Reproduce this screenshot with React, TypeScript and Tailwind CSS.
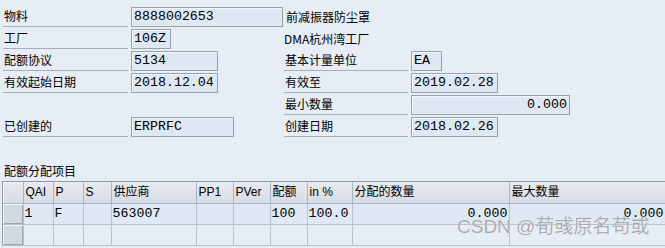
import React from 'react';

const cjk = { fontFamily: '"Noto Sans CJK SC", "Liberation Sans", sans-serif' };
const mono = { fontFamily: '"Liberation Mono", "Noto Sans CJK SC", monospace' };

const Label = ({ text, w = 'w-[125px]' }: { text: string; w?: string }) => (
  <div className={`${w} h-[21px] border-b border-[#a7b0ba] text-[12px] leading-[20px] pl-[1px] text-black`} style={cjk}>
    {text}
  </div>
);

const Box = ({ value, w, right }: { value: string; w: string; right?: boolean }) => (
  <div
    className={`${w} h-[20px] border border-[#97a2ae] bg-[#dde8f2] shadow-[inset_1px_1px_0_#f4f8fb] px-[2px] text-[13.3px] leading-[18px] text-black ${right ? 'text-right' : ''}`}
    style={mono}
  >
    {value}
  </div>
);

const cols = [20, 30, 30, 28, 85, 37, 37, 37, 45, 157, 156];
const heads = ['', 'QAI', 'P', 'S', '供应商', 'PP1', 'PVer', '配额', 'in %', '分配的数量', '最大数量'];
const row1 = ['', '1', 'F', '', '563007', '', '', '100', '100.0', '0.000', '0.000'];

export default function App() {
  return (
    <div className="relative w-[665px] h-[248px] overflow-hidden bg-[#e6edf4]">
      {/* header form */}
      <div className="flex flex-col pt-[6px] pl-[3px]">
        <div className="flex h-[22px] items-start">
          <Label text="物料" />
          <div className="w-[3px]" />
          <div className="mt-[1px]"><Box value="8888002653" w="w-[152px]" /></div>
          <div className="pl-[3px] text-[12px] leading-[20px] pt-[1px]" style={cjk}>前减振器防尘罩</div>
        </div>
        <div className="flex h-[22px] items-start">
          <Label text="工厂" />
          <div className="w-[3px]" />
          <div className="mt-[1px]"><Box value="106Z" w="w-[40px]" /></div>
          <div className="w-[113px]" />
          <div className="text-[12px] leading-[20px] pt-[1px]" style={cjk}>DMA杭州湾工厂</div>
        </div>
        <div className="flex h-[22px] items-start">
          <Label text="配额协议" />
          <div className="w-[3px]" />
          <div className="mt-[1px]"><Box value="5134" w="w-[87px]" /></div>
          <div className="w-[66px]" />
          <Label text="基本计量单位" w="w-[124px]" />
          <div className="w-[3px]" />
          <div className="mt-[1px]"><Box value="EA" w="w-[31px]" /></div>
        </div>
        <div className="flex h-[22px] items-start">
          <Label text="有效起始日期" />
          <div className="w-[3px]" />
          <div className="mt-[1px]"><Box value="2018.12.04" w="w-[87px]" /></div>
          <div className="w-[66px]" />
          <Label text="有效至" w="w-[124px]" />
          <div className="w-[3px]" />
          <div className="mt-[1px]"><Box value="2019.02.28" w="w-[87px]" /></div>
        </div>
        <div className="flex h-[22px] items-start">
          <div className="w-[281px]" />
          <Label text="最小数量" w="w-[124px]" />
          <div className="w-[3px]" />
          <div className="mt-[1px]"><Box value="0.000" w="w-[159px]" right /></div>
        </div>
        <div className="flex h-[22px] items-start">
          <Label text="已创建的" />
          <div className="w-[3px]" />
          <div className="mt-[1px]"><Box value="ERPRFC" w="w-[103px]" /></div>
          <div className="w-[50px]" />
          <Label text="创建日期" w="w-[124px]" />
          <div className="w-[3px]" />
          <div className="mt-[1px]"><Box value="2018.02.26" w="w-[87px]" /></div>
        </div>
      </div>

      {/* items table */}
      <div className="mt-[25px] pl-[4px] text-[12px] leading-[16px] text-black" style={cjk}>配额分配项目</div>
      <div className="mt-[2px] ml-[2px] border-t border-l border-[#8d9aa8]">
        <table className="border-collapse table-fixed" style={{ width: cols.reduce((a, b) => a + b, 0) }}>
          <colgroup>
            {cols.map((w, i) => (
              <col key={i} style={{ width: w }} />
            ))}
          </colgroup>
          <tbody>
            <tr className="h-[21px]">
              {heads.map((h, i) => (
                <td
                  key={i}
                  className={`border-r border-b border-[#aab6c3] bg-gradient-to-b from-[#e8ebef] to-[#d6dce3] px-[2px] text-[12px] leading-[20px] whitespace-nowrap align-middle ${i === 0 ? 'shadow-[inset_1px_1px_0_#f5f7f9]' : ''}`}
                  style={{ fontFamily: '"Liberation Sans", "Noto Sans CJK SC", sans-serif' }}
                >
                  {h}
                </td>
              ))}
            </tr>
            <tr className="h-[21px]">
              {row1.map((v, i) => (
                <td
                  key={i}
                  className={`border-r border-b border-[#b6c2ce] px-[1px] text-[13.3px] leading-[20px] whitespace-nowrap ${
                    i === 0 ? 'bg-[#d3d8de] shadow-[inset_1px_1px_0_#f2f4f6,inset_-1px_-1px_0_#9aa3ad]' : 'bg-[#dfe9f3]'
                  } ${i >= 9 ? 'text-right' : ''}`}
                  style={mono}
                >
                  {v}
                </td>
              ))}
            </tr>
            <tr className="h-[21px]">
              {cols.map((_, i) => (
                <td
                  key={i}
                  className={`border-r border-b border-[#b6c2ce] ${
                    i === 0 ? 'bg-[#d3d8de] shadow-[inset_1px_1px_0_#f2f4f6,inset_-1px_-1px_0_#9aa3ad]' : 'bg-[#e6edf4]'
                  }`}
                />
              ))}
            </tr>
          </tbody>
        </table>
      </div>

      {/* watermark */}
      <div
        className="absolute left-[457px] top-[215px] text-[19px] leading-[24px] text-[#a9acb0] whitespace-nowrap [text-shadow:0_0_1px_#ffffff]"
        style={{ fontFamily: '"Liberation Sans", "Noto Sans CJK SC", sans-serif' }}
      >
        CSDN @荀彧原名苟或
      </div>
    </div>
  );
}
